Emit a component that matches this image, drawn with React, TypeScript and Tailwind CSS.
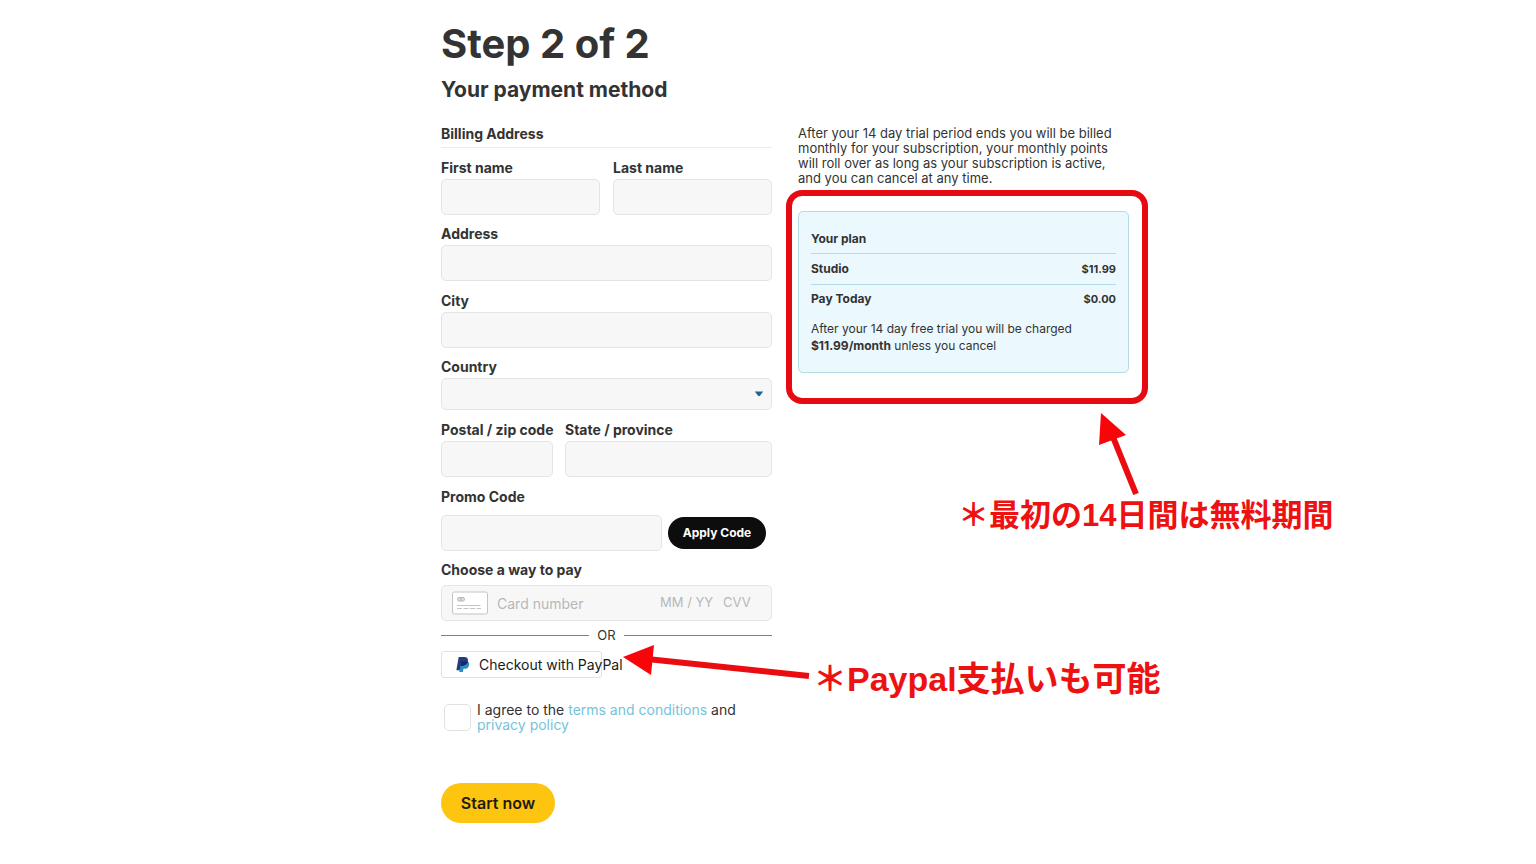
import { useState, type ReactNode } from "react";

const INPUT =
  "block w-full h-9 rounded-[5px] border border-[#e4e4e4] bg-[#f7f7f7] px-3 text-[13px] text-[#333333] outline-none focus:border-[#6bbdd6]";

const LABEL = "block text-[14px] leading-4 font-bold text-[#333333]";

function Field({
  id,
  label,
  className = "",
  children
}: {
  id: string;
  label: string;
  className?: string;
  children?: ReactNode;
}) {
  return (
    <div className={className}>
      <label htmlFor={id} className={`${LABEL} mb-[3px] whitespace-nowrap`}>
        {label}
      </label>
      {children ?? <input id={id} type="text" className={INPUT} />}
    </div>
  );
}

export default function App() {
  const [agreed, setAgreed] = useState(false);

  return (
    <div className="min-h-screen bg-white pl-[34px] font-[Inter,'Noto_Sans_CJK_JP',sans-serif] text-[#333333]">
      <main className="relative mx-auto max-w-[688px] pt-5 pb-10">
        <h1 className="text-[40px] leading-[48px] font-bold">Step 2 of 2</h1>
        <h2 className="mt-2 text-[21px] leading-7 font-bold">
          Your payment method
        </h2>

        <div className="mt-[22px] grid grid-cols-2 gap-[26px]">
          <form onSubmit={(e) => e.preventDefault()}>
            {/* Billing address */}
            <h3 className={`${LABEL} mb-3 border-b border-[#ececec] pb-[5px]`}>
              Billing Address
            </h3>

            <div className="mb-[11px] grid grid-cols-2 gap-[13px]">
              <Field id="first-name" label="First name" />
              <Field id="last-name" label="Last name" />
            </div>
            <Field id="address" label="Address" className="mb-3" />
            <Field id="city" label="City" className="mb-[11px]" />
            <Field id="country" label="Country" className="mb-3">
              <div className="relative">
                <select
                  id="country"
                  className="block h-8 w-full appearance-none rounded-[5px] border border-[#e4e4e4] bg-[#f7f7f7] px-3 text-[13px] outline-none"
                >
                  <option value=""></option>
                </select>
                <svg
                  className="pointer-events-none absolute top-[13px] right-2 h-[6px] w-[10px]"
                  viewBox="0 0 10 6"
                >
                  <path d="M.8 .5h8.400L5.900 4.800q-.9.900-1.800 0z" fill="#1b6591" />
                </svg>
              </div>
            </Field>
            <div className="mb-3 grid grid-cols-[112px_1fr] gap-3">
              <Field id="postal" label="Postal / zip code" />
              <Field id="state" label="State / province" />
            </div>

            {/* Promo */}
            <label htmlFor="promo" className={`${LABEL} mb-[10px]`}>
              Promo Code
            </label>
            <div className="mb-[11px] flex items-center gap-[6px] pr-[6px]">
              <input id="promo" type="text" className={`${INPUT} flex-1`} />
              <button
                type="button"
                className="h-8 w-[98px] shrink-0 rounded-full bg-[#0d0d0d] text-[12px] font-bold text-white"
              >
                Apply Code
              </button>
            </div>

            {/* Payment */}
            <h3 className={`${LABEL} mb-[7px]`}>Choose a way to pay</h3>
            <div className="flex h-9 items-center rounded-[5px] border border-[#e4e4e4] bg-[#f7f7f7] pl-[10px]">
              <CardIcon />
              <input
                type="text"
                aria-label="Card number"
                placeholder="Card number"
                className="ml-[9px] min-w-0 flex-1 bg-transparent text-[14px] outline-none placeholder:text-[#b8b8b8]"
              />
              <input
                type="text"
                aria-label="Expiration date"
                placeholder="MM / YY"
                className="w-[63px] bg-transparent text-[13px] outline-none placeholder:text-[#b8b8b8]"
              />
              <input
                type="text"
                aria-label="CVV"
                placeholder="CVV"
                className="w-12 bg-transparent text-[13px] outline-none placeholder:text-[#b8b8b8]"
              />
            </div>

            <div className="mt-[6px] flex items-center gap-2 text-[13px] leading-4">
              <span className="h-px flex-1 bg-[#808080]" />
              OR
              <span className="h-px flex-1 bg-[#808080]" />
            </div>

            <button
              type="button"
              className="mt-2 flex h-[27px] w-[161px] items-center gap-[9px] rounded-[3px] border border-[#e2e2e2] bg-white pl-[14px] text-[14px] whitespace-nowrap text-[#1a1a1a]"
            >
              <PayPalIcon />
              Checkout with PayPal
            </button>

            <div className="mt-6 flex items-start gap-[6px] pl-[3px]">
              <input
                id="agree"
                type="checkbox"
                checked={agreed}
                onChange={(e) => setAgreed(e.target.checked)}
                className="mt-[2px] h-[27px] w-[27px] shrink-0 appearance-none rounded-[5px] border border-[#e2e2e2] bg-white checked:bg-[#6bbdd6]"
              />
              <label htmlFor="agree" className="text-[14px] leading-[15px]">
                I agree to the{" "}
                <a href="#terms" className="text-[#76c3dc]">
                  terms and conditions
                </a>{" "}
                and
                <br />
                <a href="#privacy" className="text-[#76c3dc]">
                  privacy policy
                </a>
              </label>
            </div>

            <button
              type="submit"
              className="mt-[51px] h-10 w-[114px] rounded-full bg-[#fdc50f] text-[16px] font-semibold text-[#1f1a14]"
            >
              Start now
            </button>
          </form>

          <aside>
            <p className="text-[13px] leading-[15px]">
              After your 14 day trial period ends you will be billed
              <br />
              monthly for your subscription, your monthly points
              <br />
              will roll over as long as your subscription is active,
              <br />
              and you can cancel at any time.
            </p>

            {/* Plan summary */}
            <section className="relative mt-[25px] rounded-[5px] border border-[#b4dce6] bg-[#ebf8fe] px-3 pt-[19px] pb-[18px]">
              <table className="w-full text-[12px] leading-4 font-bold">
                <thead>
                  <tr className="border-b border-[#b4dce6]">
                    <th colSpan={2} className="pb-[6px] text-left">
                      Your plan
                    </th>
                  </tr>
                </thead>
                <tbody>
                  <tr className="border-b border-[#b4dce6]">
                    <td className="py-[7px]">Studio</td>
                    <td className="py-[7px] text-right text-[11px]">$11.99</td>
                  </tr>
                  <tr>
                    <td className="pt-[6px]">Pay Today</td>
                    <td className="pt-[6px] text-right text-[11px]">$0.00</td>
                  </tr>
                </tbody>
              </table>
              <p className="mt-[13px] text-[12px] leading-[17px]">
                After your 14 day free trial you will be charged
                <br />
                <b>$11.99/month</b> unless you cancel
              </p>
              <div className="pointer-events-none absolute -top-[22px] -right-5 -bottom-8 -left-[13px] rounded-2xl border-[6px] border-[#e60b12]" />
            </section>
          </aside>
        </div>

        {/* Notes laid over the form */}
        <svg
          className="pointer-events-none absolute top-[410px] left-[655px] h-[90px] w-[45px]"
          viewBox="0 0 45 90"
        >
          <path d="M17 27L40 84" stroke="#ea0c10" strokeWidth="6" />
          <path d="M5 3L30 25L3 35Z" fill="#f80509" />
        </svg>
        <p className="absolute top-[493px] left-[517px] font-['Liberation_Sans','Noto_Sans_CJK_JP',sans-serif] text-[31px] leading-[46px] font-bold whitespace-nowrap text-[#ee1111]">
          ＊最初の14日間は無料期間
        </p>
        <svg
          className="pointer-events-none absolute top-[640px] left-[180px] h-[44px] w-[190px]"
          viewBox="0 0 190 44"
        >
          <path d="M26 19L188 36" stroke="#ea0c10" strokeWidth="6" />
          <path d="M2 17L33 5L30 35Z" fill="#f80509" />
        </svg>
        <p className="absolute top-[655px] left-[372px] font-['Liberation_Sans','Noto_Sans_CJK_JP',sans-serif] text-[34px] leading-[48px] font-bold whitespace-nowrap text-[#ee1111]">
          ＊Paypal支払いも可能
        </p>
      </main>
    </div>
  );
}

function CardIcon() {
  return (
    <svg className="h-6 w-9 shrink-0" viewBox="0 0 36 24" fill="none">
      <rect x=".5" y="1" width="35" height="22" rx="2" fill="#fff" stroke="#c4c4c4" />
      <rect x="5.5" y="6.5" width="7" height="3.5" rx="1.5" fill="#ddd" stroke="#b8b8b8" />
      <path d="M9 6.5V10" stroke="#b8b8b8" />
      <path d="M5 14.5h23.5" stroke="#c4c4c4" />
      <path d="M5 17.5h24" stroke="#c4c4c4" strokeDasharray="5 1.5" />
    </svg>
  );
}

function PayPalIcon() {
  return (
    <svg className="h-[15px] w-[14px] shrink-0" viewBox="0 0 24 26">
      <path
        d="M8.5 7.5h9.5c4.5.5 5.5 3.5 4.3 7.500-1.200 4-4 5.500-8 5.500h-1.500l-1 5.500H5.500z"
        fill="#2790c3"
      />
      <path
        d="M4.5 0h9.500c5 0 7.500 2.700 6.500 7.500-1 5-4.500 7.500-9.500 7.500H8L6.300 23H.5z"
        fill="#253b80"
      />
      <path
        d="M9.3 7.5h8.500c1 0 1.800.1 2.700.4-1.200 4.700-4.600 7.100-9.500 7.100H8z"
        fill="#1f2467"
      />
    </svg>
  );
}
